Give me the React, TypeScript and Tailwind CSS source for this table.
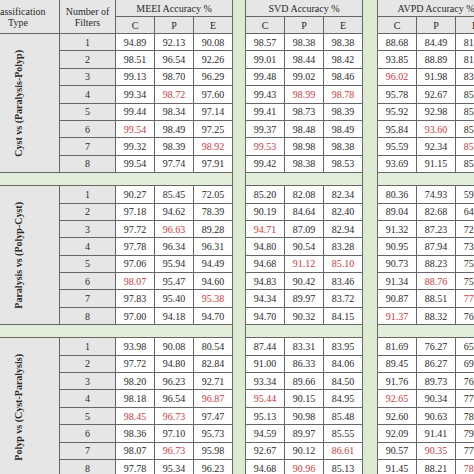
const GROUPS = [
  "Cyst vs (Paralysis-Polyp)",
  "Paralysis vs (Polyp-Cyst)",
  "Polyp vs (Cyst-Paralysis)",
];

const MEEI = [
  [
    "94.89 92.13 90.08",
    "98.51 96.54 92.26",
    "99.13 98.70 96.29",
    "99.34 98.72* 97.60",
    "99.44 98.34 97.14",
    "99.54* 98.49 97.25",
    "99.32 98.39 98.92*",
    "99.54 97.74 97.91",
  ],
  [
    "90.27 85.45 72.05",
    "97.18 94.62 78.39",
    "97.72 96.63* 89.28",
    "97.78 96.34 96.31",
    "97.06 95.94 94.49",
    "98.07* 95.47 94.60",
    "97.83 95.40 95.38*",
    "97.00 94.18 94.70",
  ],
  [
    "93.98 90.08 80.54",
    "97.72 94.80 82.84",
    "98.20 96.23 92.71",
    "98.18 96.54 96.87*",
    "98.45* 96.73* 97.47",
    "98.36 97.10 95.73",
    "98.07 96.73* 95.98",
    "97.78 95.34 96.23",
  ],
];

const SVD = [
  [
    "98.57 98.38 98.38",
    "99.01 98.44 98.42",
    "99.48 99.02 98.46",
    "99.43 98.99* 98.78*",
    "99.41 98.73 98.39",
    "99.37 98.48 98.49",
    "99.53* 98.98 98.38",
    "99.42 98.38 98.53",
  ],
  [
    "85.20 82.08 82.34",
    "90.19 84.64 82.40",
    "94.71* 87.09 82.94",
    "94.80 90.54 83.28",
    "94.68 91.12* 85.10*",
    "94.83 90.42 83.46",
    "94.34 89.97 83.72",
    "94.70 90.32 84.15",
  ],
  [
    "87.44 83.31 83.95",
    "91.00 86.33 84.06",
    "93.34 89.66 84.50",
    "95.44* 90.15 84.95",
    "95.13 90.98 85.48",
    "94.59 89.97 85.55",
    "92.67 90.12 86.61*",
    "94.68 90.96* 85.13",
  ],
];

const AVPD = [
  [
    "88.68 84.49 81.27",
    "93.85 88.89 81.94",
    "96.02* 91.98 83.52",
    "95.78 92.67 85.16",
    "95.92 92.98 85.40",
    "95.84 93.60* 85.73",
    "95.59 92.34 85.96*",
    "93.69 91.15 85.05",
  ],
  [
    "80.36 74.93 59.12",
    "89.04 82.68 64.37",
    "91.32 87.23 72.48",
    "90.95 87.94 73.61",
    "90.73 88.23 75.02",
    "91.34 88.76* 75.49",
    "90.87 88.51 77.15*",
    "91.37* 88.32 76.84",
  ],
  [
    "81.69 76.27 65.33",
    "89.45 86.27 69.58",
    "91.76 89.73 76.21",
    "92.65* 90.34 77.40",
    "92.60 90.63 78.12",
    "92.09 91.41 79.05",
    "90.57 90.35* 77.86",
    "91.45 88.21 78.93*",
  ],
];

const ROWS =
  "grid-rows-[16px_16px_repeat(8,16.4px)_12px_repeat(8,16.4px)_12px_repeat(8,16.4px)]";

function Value({ v }: { v: string }) {
  const red = v.endsWith("*");
  return (
    <div
      className={
        "flex items-center justify-center bg-white " +
        (red ? "text-[#cc3a42]" : "text-[#2a2a2a]")
      }
    >
      {red ? v.slice(0, -1) : v}
    </div>
  );
}

function Head({ children, className = "" }: { children: React.ReactNode; className?: string }) {
  return (
    <div className={"flex items-center justify-center bg-[#e6e6e6] text-center text-[#2a2a2a] " + className}>
      {children}
    </div>
  );
}

function Separator({ span }: { span: string }) {
  return <div className={"bg-[#e1eed9] " + span} />;
}

function DataTable({
  title,
  data,
  withLabels,
}: {
  title: string;
  data: string[][];
  withLabels?: boolean;
}) {
  const cols = withLabels
    ? "grid-cols-[82px_55px_38px_38px_38px]"
    : "grid-cols-[38px_38px_38px]";
  const span = withLabels ? "col-span-5" : "col-span-3";

  return (
    <div className={"grid shrink-0 gap-px border border-[#666] bg-[#666] " + cols + " " + ROWS}>
      {withLabels && (
        <>
          <Head className="row-span-2 leading-[11px]">
            Classification
            <br />
            Type
          </Head>
          <Head className="row-span-2 leading-[11px]">
            Number of
            <br />
            Filters
          </Head>
        </>
      )}
      <Head className="col-span-3">{title}</Head>
      <Head>C</Head>
      <Head>P</Head>
      <Head>E</Head>

      {data.map((group, g) => (
        <Group key={g} g={g} rows={group} withLabels={withLabels} span={span} />
      ))}
    </div>
  );
}

function Group({
  g,
  rows,
  withLabels,
  span,
}: {
  g: number;
  rows: string[];
  withLabels?: boolean;
  span: string;
}) {
  return (
    <>
      {withLabels && (
        <Head className="row-span-8">
          <span className="rotate-180 font-bold [writing-mode:vertical-rl]">{GROUPS[g]}</span>
        </Head>
      )}
      {rows.map((r, i) => (
        <Row key={i} n={i + 1} values={r.split(" ")} withLabels={withLabels} />
      ))}
      {g < 2 && <Separator span={span} />}
    </>
  );
}

function Row({ n, values, withLabels }: { n: number; values: string[]; withLabels?: boolean }) {
  return (
    <>
      {withLabels && <Head>{n}</Head>}
      {values.map((v, i) => (
        <Value key={i} v={v} />
      ))}
    </>
  );
}

export default function App() {
  return (
    <div className="h-[474px] w-[474px] overflow-hidden bg-[#dcebd2] font-['Liberation_Serif',serif] text-[10px]">
      <div className="-ml-[24px] -mt-px flex">
        <DataTable title="MEEI Accuracy %" data={MEEI} withLabels />
        <div className="w-[12px] shrink-0" />
        <DataTable title="SVD Accuracy %" data={SVD} />
        <div className="w-[14px] shrink-0" />
        <DataTable title="AVPD Accuracy %" data={AVPD} />
      </div>
    </div>
  );
}
